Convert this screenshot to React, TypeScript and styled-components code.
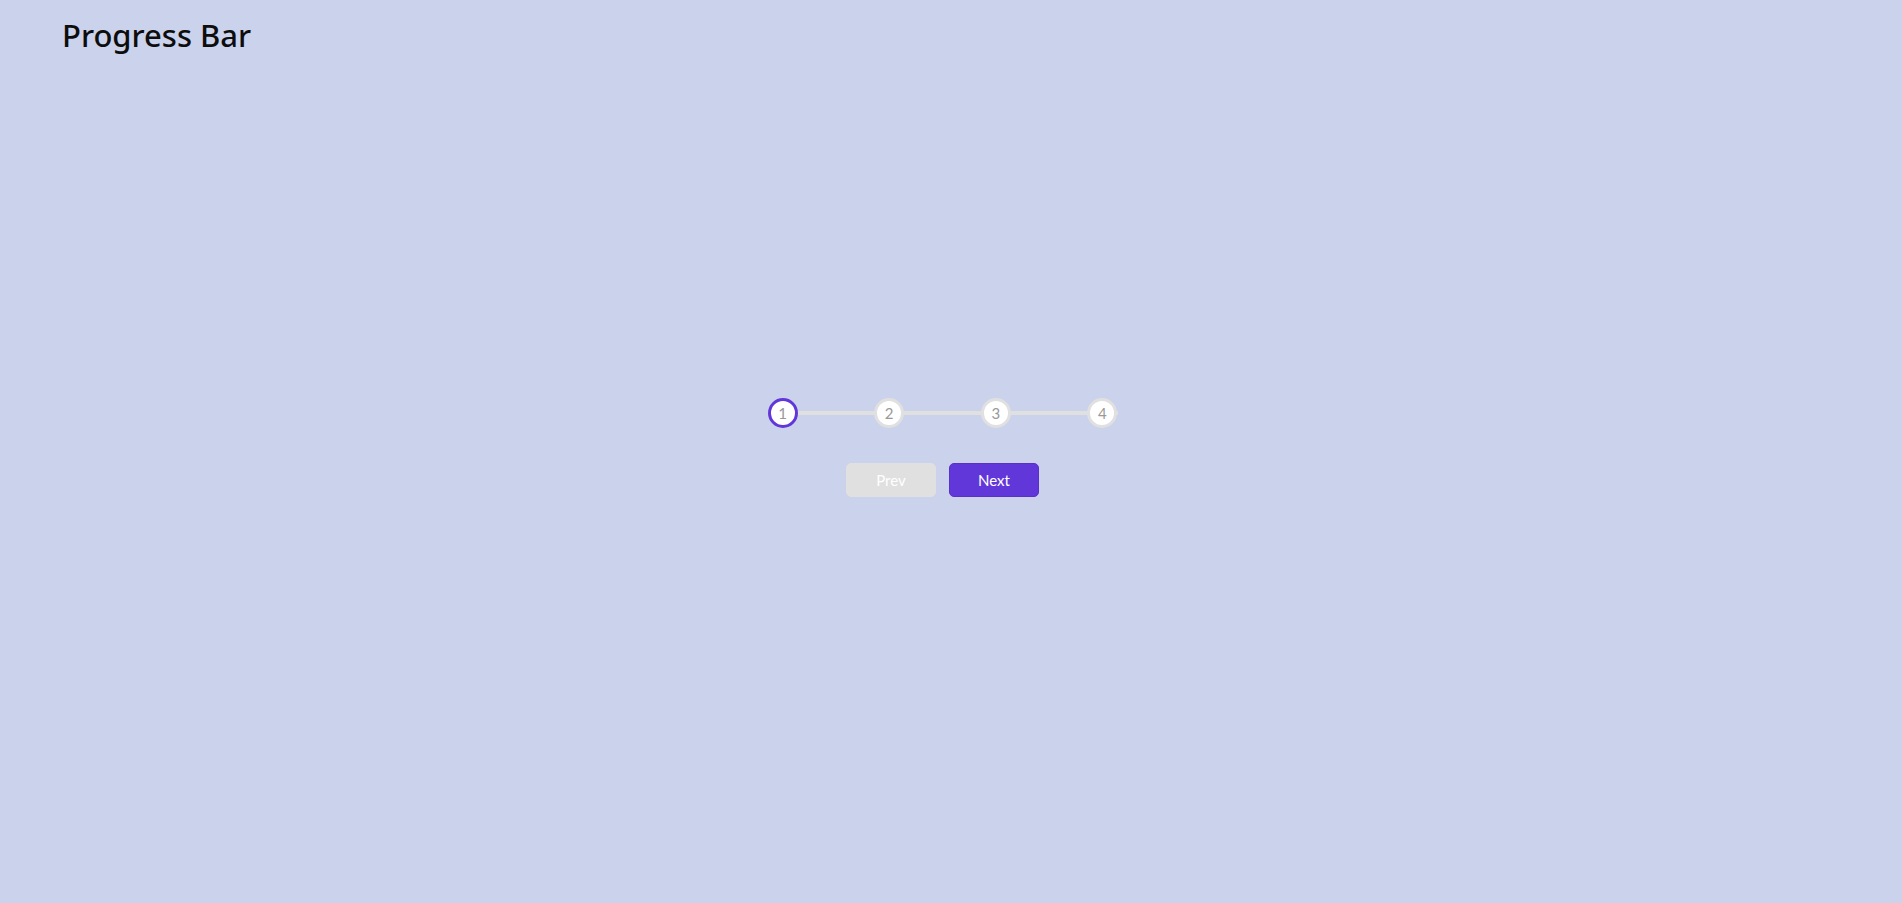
import { useState } from 'react'
import styled, { createGlobalStyle } from 'styled-components'

const STEPS = [1, 2, 3, 4]
const PURPLE = '#6237da'
const EMPTY = '#e0e0e0'

const GlobalStyle = createGlobalStyle`
  * {
    box-sizing: border-box;
  }
  body {
    margin: 0;
    background: #cbd2ec;
    font-family: Lato, 'Noto Sans', sans-serif;
    height: 100vh;
    overflow: hidden;
  }
`

const App = () => {
  const [current, setCurrent] = useState(1)

  const progress = ((current - 1) / (STEPS.length - 1)) * 100

  return (
    <Page>
      <GlobalStyle />
      <Title>Progress Bar</Title>
      <Center>
        <Container>
          <Track>
            <Fill style={{ width: `${progress}%` }} />
          </Track>
          {STEPS.map((step) => (
            <Circle key={step} active={step <= current}>
              {step}
            </Circle>
          ))}
        </Container>
        <Buttons>
          <Button
            disabled={current === 1}
            onClick={() => setCurrent(current - 1)}
          >
            Prev
          </Button>
          <Button
            disabled={current === STEPS.length}
            onClick={() => setCurrent(current + 1)}
          >
            Next
          </Button>
        </Buttons>
      </Center>
    </Page>
  )
}

const Page = styled.div`
  height: 100vh;
  display: flex;
  flex-direction: column;
`

const Title = styled.h1`
  margin: 0;
  padding: 14px 0 0 62px;
  font-family: 'Noto Sans', Lato, sans-serif;
  font-size: 31px;
  font-weight: 500;
  color: #0d0d0d;
  line-height: 42px;
`

const Center = styled.div`
  position: absolute;
  inset: 0;
  display: flex;
  flex-direction: column;
  align-items: center;
  justify-content: center;
  padding: 0 17px 8px 0;
`

const Container = styled.div`
  position: relative;
  display: flex;
  justify-content: space-between;
  width: 350px;
  margin-bottom: 35px;
`

const Track = styled.div`
  position: absolute;
  top: 50%;
  left: 0;
  width: 100%;
  height: 4px;
  transform: translateY(-50%);
  background: ${EMPTY};
  z-index: 0;
`

const Fill = styled.div`
  height: 100%;
  background: ${PURPLE};
  transition: width 0.4s ease;
`

const Circle = styled.div<{ active: boolean }>`
  position: relative;
  z-index: 1;
  width: 30px;
  height: 30px;
  border-radius: 50%;
  background: #fff;
  border: 3px solid ${(p) => (p.active ? PURPLE : EMPTY)};
  color: #999;
  font-size: 15px;
  display: flex;
  align-items: center;
  justify-content: center;
  transition: border-color 0.4s ease;
`

const Buttons = styled.div`
  display: flex;
  gap: 13px;
`

const Button = styled.button`
  width: 90px;
  height: 34px;
  border: 1px solid #5a30c8;
  border-radius: 5px;
  background: ${PURPLE};
  color: #fff;
  font-family: inherit;
  font-size: 15px;
  cursor: pointer;

  &:disabled {
    background: ${EMPTY};
    border-color: ${EMPTY};
    cursor: not-allowed;
  }
`

export default App
